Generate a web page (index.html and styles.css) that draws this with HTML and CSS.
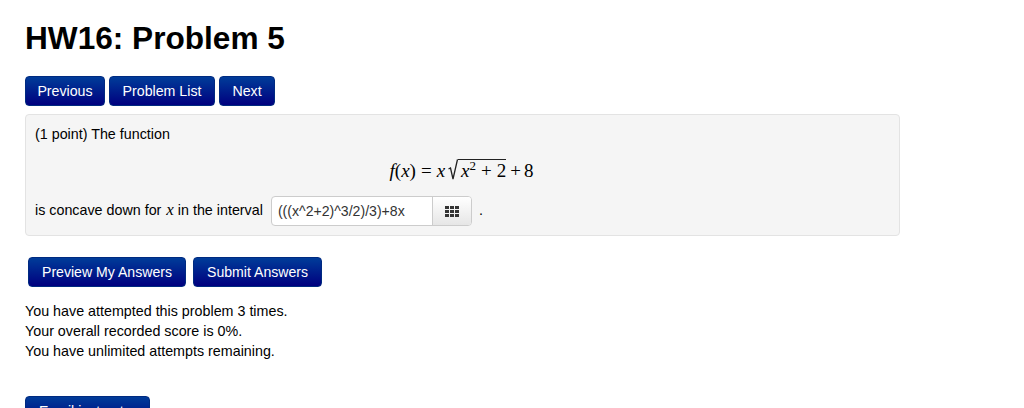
FILE: index.html
```html
<!DOCTYPE html>
<html lang="en">
<head>
<meta charset="utf-8">
<title>HW16: Problem 5</title>
<link rel="stylesheet" href="styles.css">
</head>
<body>
<main class="page">
  <h1 class="title">HW16: Problem 5</h1>
  <nav class="nav">
    <a class="btn btn-prev">Previous</a>
    <a class="btn btn-list">Problem List</a>
    <a class="btn btn-next">Next</a>
  </nav>
  <section class="problem">
    <p class="line">(1 point) The function</p>
    <div class="equation">
      <i>f</i><span>(</span><i>x</i><span>)</span><span class="op">=</span><i>x</i>
      <svg class="radical" width="10" height="25" viewBox="0 0 10 25"><path d="M0.5 10 L2.5 9 L5 20 L9.5 0.5" fill="none" stroke="#222" stroke-width="1.3"/></svg>
      <span class="radicand"><i>x</i><sup>2</sup><span class="op plus">+</span><span>2</span></span>
      <span class="op op-last">+</span><span>8</span>
    </div>
    <div class="answer-row">
      <span class="prompt">is concave down for <i class="var">x</i> in the interval</span>
      <div class="field">
        <span class="field-text">(((x^2+2)^3/2)/3)+8x</span>
        <span class="field-btn">
          <svg width="14" height="11" viewBox="0 0 14 11" fill="#333"><rect x="0" y="0" width="4" height="3"/><rect x="5" y="0" width="4" height="3"/><rect x="10" y="0" width="4" height="3"/><rect x="0" y="4" width="4" height="3"/><rect x="5" y="4" width="4" height="3"/><rect x="10" y="4" width="4" height="3"/><rect x="0" y="8" width="4" height="3"/><rect x="5" y="8" width="4" height="3"/><rect x="10" y="8" width="4" height="3"/></svg>
        </span>
      </div>
      <span class="period">.</span>
    </div>
  </section>
  <div class="actions">
    <a class="btn">Preview My Answers</a>
    <a class="btn">Submit Answers</a>
  </div>
  <div class="status">
    <p>You have attempted this problem 3 times.</p>
    <p>Your overall recorded score is 0%.</p>
    <p>You have unlimited attempts remaining.</p>
  </div>
  <a class="btn email">Email instructor</a>
</main>
</body>
</html>
```
FILE: styles.css
```css
html, body {
  margin: 0;
  height: 408px;
  overflow: hidden;
  background: #fff;
}
body {
  font-family: "Liberation Sans", Arial, sans-serif;
  font-size: 14.3px;
  line-height: 20px;
  color: #000;
}
.page {
  padding: 20px 0 0 25px;
}
.title {
  margin: 0;
  font-size: 31.6px;
  line-height: 36px;
  font-weight: 700;
  color: #000;
}
.btn {
  display: inline-block;
  box-sizing: border-box;
  height: 30px;
  padding: 0 13px;
  line-height: 28px;
  font-size: 14.1px;
  color: #fff;
  border: 1px solid #002a80;
  border-radius: 4px;
  background: linear-gradient(#003c99, #00007f);
  white-space: nowrap;
}
.nav {
  display: flex;
  gap: 4px;
  margin-top: 20px;
}
.nav .btn {
  padding: 0;
  font-size: 14.2px;
  text-align: center;
}
.btn-prev {
  width: 80px;
}
.btn-list {
  width: 106px;
}
.btn-next {
  width: 56px;
}
.problem {
  box-sizing: border-box;
  width: 875px;
  height: 122px;
  margin-top: 8px;
  padding: 9px 9px 0;
  background: #f5f5f5;
  border: 1px solid #e3e3e3;
  border-radius: 4px;
}
.line {
  margin: 0;
}
.equation {
  display: flex;
  justify-content: center;
  align-items: flex-end;
  height: 30px;
  margin-top: 8px;
  padding-right: 2px;
  font-family: "Liberation Serif", "Times New Roman", serif;
  font-size: 19px;
  line-height: 22px;
  white-space: pre;
}
.op {
  margin: 0 5px;
}
.op-last {
  margin: 0 3px 0 4px;
}
.radical {
  margin: 0 0 -2px 3px;
}
.radicand {
  display: flex;
  box-sizing: border-box;
  height: 25px;
  margin-bottom: -2px;
  padding-left: 3px;
  border-top: 1px solid #222;
  line-height: 21px;
}
.radicand sup {
  font-size: 13px;
  line-height: 12px;
  margin-top: 0;
}
.radicand .plus {
  margin-left: 5px;
  margin-right: 5px;
}
.answer-row {
  display: flex;
  align-items: flex-start;
  height: 31px;
  margin-top: 13px;
  line-height: 30px;
  white-space: pre;
}
.var {
  margin-left: 1px;
  font-family: "Liberation Serif", "Times New Roman", serif;
  font-size: 17px;
}
.field {
  display: flex;
  box-sizing: border-box;
  width: 201px;
  height: 30px;
  margin: 1px 0 0 8px;
  background: #fff;
  border: 1px solid #ccc;
  border-radius: 4px;
}
.field-text {
  width: 160px;
  padding-left: 6px;
  box-sizing: border-box;
  font-size: 14.1px;
  line-height: 29px;
  color: #333;
}
.field-btn {
  display: flex;
  flex: 1;
  align-items: center;
  justify-content: center;
  border-left: 1px solid #ccc;
  border-radius: 0 3px 3px 0;
  background: linear-gradient(#fff, #e6e6e6);
}
.period {
  margin-left: 7px;
}
.actions {
  display: flex;
  gap: 7px;
  margin: 21px 0 0 3px;
}
.status {
  margin-top: 14px;
}
.status p {
  margin: 0;
}
.email {
  display: block;
  width: 125px;
  margin-top: 35px;
}
```
